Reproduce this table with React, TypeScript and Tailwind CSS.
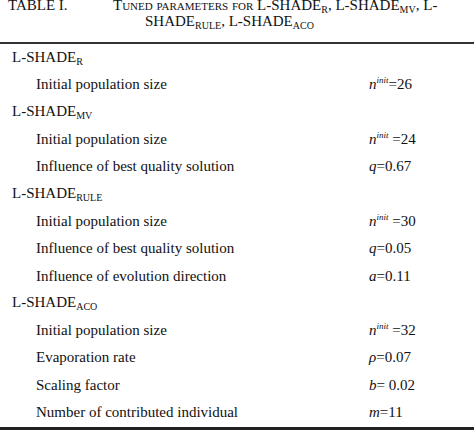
import React from "react";

const Sub = ({ children }: { children: React.ReactNode }) => (
  <span className="text-[10px] leading-none align-[-3px]">{children}</span>
);

const Init = () => (
  <span className="italic text-[9px] leading-none align-[6px]">init</span>
);

type Row =
  | { kind: "section"; name: string; sub: string }
  | { kind: "item"; label: string; value: React.ReactNode };

const rows: Row[] = [
  { kind: "section", name: "L-SHADE", sub: "R" },
  { kind: "item", label: "Initial population size", value: <><i>n</i><Init />=26</> },
  { kind: "section", name: "L-SHADE", sub: "MV" },
  { kind: "item", label: "Initial population size", value: <><i>n</i><Init /> =24</> },
  { kind: "item", label: "Influence of best quality solution", value: <><i>q</i>=0.67</> },
  { kind: "section", name: "L-SHADE", sub: "RULE" },
  { kind: "item", label: "Initial population size", value: <><i>n</i><Init /> =30</> },
  { kind: "item", label: "Influence of best quality solution", value: <><i>q</i>=0.05</> },
  { kind: "item", label: "Influence of evolution direction", value: <><i>a</i>=0.11</> },
  { kind: "section", name: "L-SHADE", sub: "ACO" },
  { kind: "item", label: "Initial population size", value: <><i>n</i><Init /> =32</> },
  { kind: "item", label: "Evaporation rate", value: <><i>ρ</i>=0.07</> },
  { kind: "item", label: "Scaling factor", value: <><i>b</i>= 0.02</> },
  { kind: "item", label: "Number of contributed individual", value: <><i>m</i>=11</> },
];

export default function App() {
  return (
    <div
      className="w-[474px] h-[430px] overflow-hidden bg-white text-[#111] flex flex-col"
      style={{ fontFamily: '"Liberation Serif", "Times New Roman", serif' }}
    >
      <div className="flex shrink-0 text-[15px] leading-[15px] -mt-[2px]">
        <div className="pl-[8px] w-[113px] shrink-0">TABLE I.</div>
        <div className="flex flex-col">
          <div className="whitespace-nowrap h-[16px]">
            <span className="[font-variant:small-caps]">Tuned parameters for</span> L-SHADE<Sub>R</Sub>, L-SHADE<Sub>MV</Sub>, L-
          </div>
          <div className="whitespace-nowrap h-[15px] pl-[32px]">
            SHADE<Sub>RULE</Sub>, L-SHADE<Sub>ACO</Sub>
          </div>
        </div>
      </div>
      <div className="shrink-0 mt-[13px] h-[1.5px] bg-[#333]" />
      <div className="flex flex-col shrink-0 text-[15px]">
        {rows.map((r, i) => (
          <div key={i} className="h-[27.3px] shrink-0 grid grid-cols-[369px_1fr] items-center whitespace-nowrap leading-[18px]">
            {r.kind === "section" ? (
              <div className="pl-[12px]">
                {r.name}
                <Sub>{r.sub}</Sub>
              </div>
            ) : (
              <>
                <div className="pl-[36px]">{r.label}</div>
                <div>{r.value}</div>
              </>
            )}
          </div>
        ))}
      </div>
      <div className="shrink-0 mt-[1px] h-[3px] bg-[#222]" />
    </div>
  );
}
